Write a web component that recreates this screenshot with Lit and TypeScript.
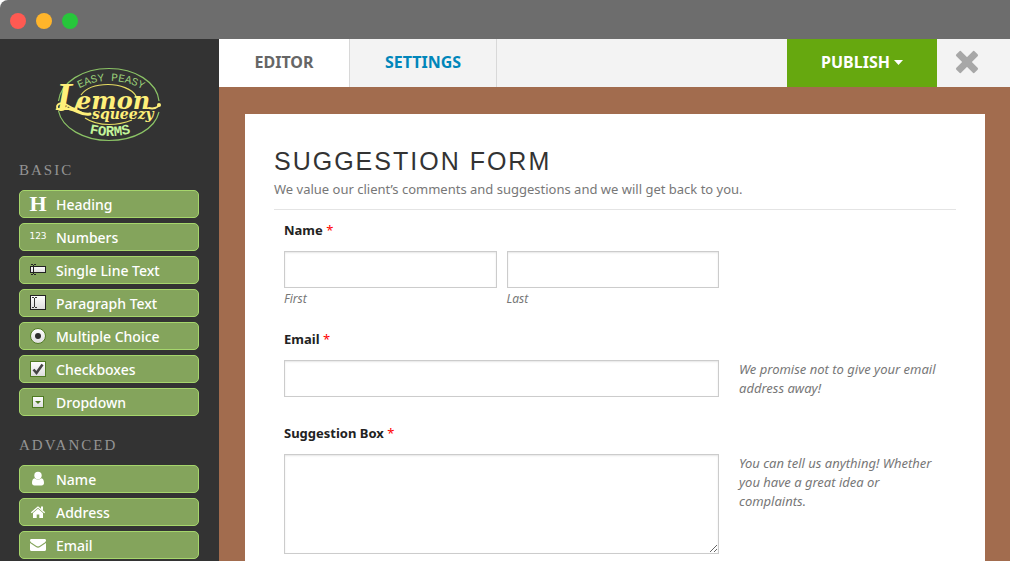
import { LitElement, html, css, svg } from "lit";
import { customElement } from "lit/decorators.js";

const icon = (body: unknown) => html`<svg class="icon" viewBox="0 0 20 20" aria-hidden="true">${body}</svg>`;

const shade = svg`<defs><linearGradient id="g" x1="0" y1="0" x2="0" y2="1">
  <stop offset="0" stop-color="#fff"/><stop offset="1" stop-color="#dcdcdc"/></linearGradient></defs>`;

const icons: Record<string, unknown> = {
  heading: html`<span class="icon glyph-h" aria-hidden="true">H</span>`,
  numbers: html`<span class="icon glyph-n" aria-hidden="true">123</span>`,
  line: icon(svg`${shade}<rect x="2.5" y="6.5" width="15" height="6" fill="url(#g)" stroke="#222"/>
    <path d="M3 4.5h2M6 4.5h2M5.5 5v9M3 14.5h2M6 14.5h2" stroke="#222" fill="none"/>`),
  paragraph: icon(svg`${shade}<rect x="2.5" y="2.5" width="15" height="14" fill="url(#g)" stroke="#222"/>
    <path d="M4 4.500h2M7 4.500h2M6.500 5v9M4 14.500h2M7 14.500h2" stroke="#333" fill="none"/>`),
  choice: icon(svg`${shade}<circle cx="10" cy="10" r="7.500" fill="url(#g)" stroke="#4f7a22"/><circle cx="10" cy="10" r="3" fill="#2e2e2e"/>`),
  check: icon(svg`${shade}<rect x="2.500" y="2.500" width="15" height="15" fill="url(#g)" stroke="#4f7a22"/>
    <path d="M5.500 10.500l3 3.500 6-8.500" stroke="#444" stroke-width="2.600" fill="none"/>`),
  dropdown: icon(svg`${shade}<rect x="4.500" y="4.500" width="11" height="11" fill="url(#g)" stroke="#4f7a22"/>
    <path d="M7 9h6l-3 3z" fill="#4f7a22"/>`),
  person: icon(svg`<circle cx="10" cy="6.500" r="3.700" fill="#fff"/>
    <path d="M6.600 9.200C4.800 9.500 4 11.200 4 14c0 1.600 1 2.500 2.400 2.500h7.200c1.400 0 2.400-.9 2.400-2.500 0-2.800-.8-4.500-2.600-4.800a4.800 4.800 0 0 1-6.800 0z" fill="#fff"/>`),
  home: icon(svg`<path d="M5 11l5-4.200L15 11v5h-3.700v-3.600H8.700V16H5z" fill="#fff"/>
    <path d="M3.300 10.700L10 5l6.700 5.700" stroke="#fff" stroke-width="1.300" fill="none"/><path d="M13 4.500h2v4l-2-1.700z" fill="#fff"/>`),
  mail: icon(svg`<path d="M2 5.500C2 4.500 2.600 4 3.500 4h13c.9 0 1.500.5 1.500 1.500 0 .8-.6 1.500-1.300 2L11.500 11c-.9.6-2.100.6-3 0L3.300 7.500C2.600 7 2 6.300 2 5.500z" fill="#fff"/>
    <path d="M2 8l6 4.100c1.200.8 2.800.8 4 0L18 8v6.500c0 .9-.6 1.500-1.500 1.500h-13c-.9 0-1.500-.6-1.500-1.500z" fill="#fff"/>`),
};

const groups = [
  {
    title: "BASIC",
    items: [
      ["heading", "Heading"], ["numbers", "Numbers"], ["line", "Single Line Text"], ["paragraph", "Paragraph Text"],
      ["choice", "Multiple Choice"], ["check", "Checkboxes"], ["dropdown", "Dropdown"],
    ],
  },
  { title: "ADVANCED", items: [["person", "Name"], ["home", "Address"], ["mail", "Email"]] },
];

@customElement("brand-logo")
export class BrandLogo extends LitElement {
  static styles = css`
    :host { display: block; }
    .logo { display: block; width: 120px; height: 84px; }
    .ring { fill: none; stroke: #8cc466; stroke-width: 1.2; }
    .inner { fill: none; stroke: #e6dc62; stroke-width: 1.2; }
    .swash { fill: none; stroke: #fff07a; stroke-linecap: round; }
    .script { font-family: "DejaVu Serif", serif; font-style: italic; font-weight: bold; fill: #fff07a; }
    .word { font-size: 24px; }
    .small { font-size: 14px; }
    .cap { font-family: "Liberation Serif", serif; font-size: 40px; }
    .slab { font-family: "Liberation Mono", monospace; text-anchor: middle; }
    .top { font-size: 11px; fill: #9bd07a; }
    .bottom { font-size: 14px; font-weight: bold; fill: #c3f59a; }
  `;
  render() {
    return html`<svg class="logo" viewBox="0 0 120 84" role="img" aria-label="Easy Peasy Lemon Squeezy Forms">
      <defs><path id="arc" d="M26 28Q60 9 96 29"/><path id="smile" d="M32 69Q60 79 88 69"/></defs>
      <path class="ring" d="M8.500 39C11 20 33 6.500 59 6.500S107 20 109 39"/>
      <path class="ring" d="M8.500 49C12 66 34 78.500 59 78.500S105 67 109 50"/>
      <path class="inner" d="M31 33C36 26 46 22.500 58 22.500S82 27 86 34"/>
      <path class="inner" d="M35 56C41 60 49 62.500 59 62.500S77 60 82 58"/>
      <text class="slab top"><textPath href="#arc" startOffset="50%">EASY PEASY</textPath></text>
      <text class="script cap" x="6" y="48">L</text>
      <path class="swash" stroke-width="1.800" d="M17 45C13 50 7 48 7 45s4-5 8-3 12 7 20 10"/>
      <path class="swash" stroke-width="3" d="M20 47c7 1 12 7 20 5"/>
      <text class="script word" x="26" y="47">emon</text>
      <path class="swash" stroke-width="2" d="M99 46c4 1 9 0 10-3"/>
      <circle cx="109" cy="43" r="2" fill="#fff07a"/>
      <text class="script small" x="42" y="57">squeezy</text>
      <text class="slab bottom"><textPath href="#smile" startOffset="50%">FORMS</textPath></text>
    </svg>`;
  }
}

@customElement("app-root")
export class AppRoot extends LitElement {
  static styles = css`
    :host {
      display: flex; flex-direction: column; height: 100vh; overflow: hidden;
      font-family: "Noto Sans", sans-serif; font-size: 13px; color: #777; background: #fff;
    }
    * { box-sizing: border-box; }
    button { font: inherit; border: 0; margin: 0; padding: 0; cursor: pointer; }
    .titlebar { flex: none; height: 39px; padding: 3px 10px 0; display: flex; align-items: center; gap: 10px; background: #6d6d6d; border-top-left-radius: 8px; }
    .dot { width: 16px; height: 16px; border-radius: 50%; }
    .red { background: #ff5a52; }
    .amber { background: #ffb52b; }
    .green { background: #27c63b; }
    .body { flex: 1; min-height: 0; display: flex; }
    .sidebar { flex: none; width: 219px; padding: 23px 20px 0 19px; background: #333; overflow: hidden; }
    .brand { margin: 0 0 14px 31px; }
    .group { margin-bottom: 19px; }
    .group-title { margin: 0 0 10px; font: 15px/20px "Liberation Serif", serif; letter-spacing: 2px; color: #949494; }
    .list { display: grid; gap: 5px; margin: 0; padding: 0; list-style: none; }
    .tool {
      width: 100%; height: 28px; padding: 0 8px; display: flex; align-items: center; gap: 8px;
      background: #84a45c; border: 1px solid #a6d66c; border-radius: 5px; color: #fff; font-size: 14px; font-weight: 500; line-height: 20px;
    }
    .name { padding-top: 2px; }
    .icon { flex: none; width: 20px; height: 20px; text-align: center; }
    .glyph-h { font: bold 22px/20px "Liberation Serif", serif; }
    .glyph-n { font: 9px/18px "DejaVu Sans", sans-serif; }
    .main { flex: 1; min-width: 0; display: flex; flex-direction: column; background: #a26c4e; }
    .bar { flex: none; height: 48px; display: flex; background: #f3f3f3; font-size: 16px; font-weight: 700; }
    .tab { min-width: 131px; padding: 0 20px 2px; border-right: 1px solid #d8d8d8; background: none; color: #0086ba; }
    .wide { min-width: 147px; }
    .current { background: #fff; color: #666; }
    .spacer { flex: 1; }
    .publish { width: 150px; padding-bottom: 2px; display: flex; align-items: center; justify-content: center; gap: 4px; background: #66a80f; color: #fff; }
    .caret { width: 9px; height: 5px; fill: #fff; }
    .close { width: 73px; padding: 0 14px 2px 0; display: flex; align-items: center; justify-content: center; background: none; }
    .cross { width: 24px; height: 24px; fill: #a7a7a7; }
    .canvas { flex: 1; min-height: 0; padding: 27px 25px 0 26px; overflow: hidden; }
    .card { min-height: 100%; padding: 30px 29px; background: #fff; }
    .head { padding-bottom: 10px; border-bottom: 1px solid #e4e4e4; }
    .title { margin: 0; font: 25px/35px "Liberation Sans", sans-serif; letter-spacing: 2px; color: #333; }
    .sub { margin: 0; line-height: 20px; }
    .form { display: grid; gap: 20px; padding: 10px; }
    .row { display: grid; grid-template-columns: minmax(0, 1fr) 207px; column-gap: 20px; row-gap: 11px; margin: 0; padding: 0; border: 0; }
    .label { grid-column: 1 / -1; line-height: 20px; font-weight: 700; color: #222; }
    .req { color: #f00; font-weight: 400; }
    .pair { display: grid; grid-template-columns: 1fr 1fr; gap: 10px; }
    .part { display: grid; gap: 1px; font-style: italic; font-size: 12px; line-height: 20px; }
    .box { display: block; width: 100%; height: 37px; margin: 0; padding: 8px; border: 1px solid #ccc; border-radius: 0; background: #fff; box-shadow: inset 0 1px 2px #e6e6e6; font: inherit; outline: 0; }
    .area { height: 100px; resize: both; }
    .hint { margin: 0; padding-bottom: 5px; font-style: italic; line-height: 19px; }
  `;

  render() {
    return html`
      <header class="titlebar"><span class="dot red"></span><span class="dot amber"></span><span class="dot green"></span></header>
      <div class="body">
        <aside class="sidebar">
          <brand-logo class="brand"></brand-logo>
          ${groups.map((g) => html`<section class="group">
            <h2 class="group-title">${g.title}</h2>
            <ul class="list">${g.items.map(([k, t]) => html`<li><button class="tool" type="button">${icons[k]}<span class="name">${t}</span></button></li>`)}</ul>
          </section>`)}
        </aside>
        <main class="main">
          <nav class="bar">
            <button class="tab current" type="button">EDITOR</button>
            <button class="tab wide" type="button">SETTINGS</button>
            <span class="spacer"></span>
            <button class="publish" type="button">PUBLISH<svg class="caret" viewBox="0 0 9 5"><path d="M0 0h9L4.500 5z"/></svg></button>
            <button class="close" type="button" aria-label="Close"><svg class="cross" viewBox="0 0 24 24"><g transform="rotate(45 12 12)"><rect x="-1" y="8.500" width="26" height="7" rx="1.500"/><rect x="8.500" y="-1" width="7" height="26" rx="1.500"/></g></svg></button>
          </nav>
          <div class="canvas">
            <div class="card">
              <div class="head">
                <h1 class="title">SUGGESTION FORM</h1>
                <p class="sub">We value our client’s comments and suggestions and we will get back to you.</p>
              </div>
              <form class="form">
                <div class="row" role="group" aria-labelledby="name">
                  <span class="label" id="name">Name <span class="req">*</span></span>
                  <div class="pair">
                    <label class="part"><input class="box" type="text" />First</label>
                    <label class="part"><input class="box" type="text" />Last</label>
                  </div>
                </div>
                <div class="row">
                  <label class="label" for="email">Email <span class="req">*</span></label>
                  <input class="box" id="email" type="email" />
                  <p class="hint">We promise not to give your email address away!</p>
                </div>
                <div class="row">
                  <label class="label" for="idea">Suggestion Box <span class="req">*</span></label>
                  <textarea class="box area" id="idea"></textarea>
                  <p class="hint">You can tell us anything! Whether you have a great idea or complaints.</p>
                </div>
              </form>
            </div>
          </div>
        </main>
      </div>`;
  }
}
